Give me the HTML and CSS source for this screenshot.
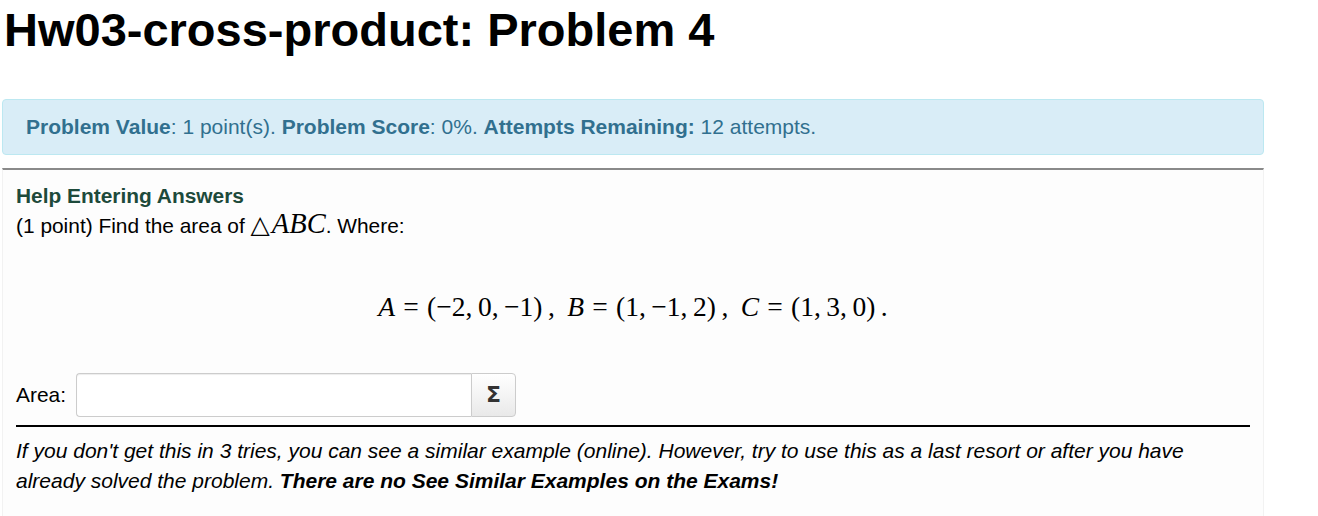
FILE: index.html
```html
<!DOCTYPE html>
<html>
<head>
<meta charset="utf-8">
<link rel="stylesheet" href="styles.css">
</head>
<body>
<div class="page">
  <h1 class="title">Hw03-cross-product: Problem 4</h1>
  <div class="alert"><b>Problem Value</b>: 1 point(s). <b>Problem Score</b>: 0%. <b>Attempts Remaining:</b> 12 attempts.</div>
  <div class="problem">
    <div class="help">Help Entering Answers</div>
    <div class="text">(1 point) Find the area of <span class="m"><span class="tri">△</span><i>ABC</i></span>. Where:</div>
    <div class="display">
      <span class="m big"><i>A</i><span class="rel">=</span>(−2<span class="cm">,</span>0<span class="cm">,</span>−1)<span class="sp1"></span>,<span class="sp2"></span><i>B</i><span class="rel">=</span>(1<span class="cm">,</span>−1<span class="cm">,</span>2)<span class="sp1"></span>,<span class="sp2"></span><i>C</i><span class="rel">=</span>(1<span class="cm">,</span>3<span class="cm">,</span>0)<span class="sp1"></span>.</span>
    </div>
    <div class="answer">
      <label class="lbl">Area:</label>
      <div class="group">
        <input class="inp" type="text">
        <span class="btn">Σ</span>
      </div>
    </div>
    <div class="note">
      <p class="note-text"><i>If you don't get this in 3 tries, you can see a similar example (online). However, try to use this as a last resort or after you have already solved the problem. <b>There are no See Similar Examples on the Exams!</b></i></p>
    </div>
  </div>
</div>
</body>
</html>
```
FILE: styles.css
```css
html, body {
  margin: 0;
  padding: 0;
  background: #fff;
}
body {
  font-family: "Liberation Sans", Arial, sans-serif;
  color: #000;
}
.page {
  width: 1262px;
  padding: 0 0 0 2px;
}
.title {
  font-size: 47px;
  font-weight: bold;
  line-height: 56px;
  margin: 0;
  padding: 2px 0 0 2px;
  color: #000;
}
.alert {
  margin-top: 41px;
  height: 56px;
  box-sizing: border-box;
  border: 1px solid #bce8f1;
  background: #d9edf7;
  border-radius: 4px;
  color: #31708f;
  font-size: 21px;
  line-height: 54px;
  padding: 0 0 0 23px;
  white-space: nowrap;
}
.alert b { font-weight: bold; }
.problem {
  margin-top: 13px;
  border-top: 2px solid #8a8a8a;
  background: #fdfdfd;
  border-right: 1px solid #f2f2f2;
  border-left: 1px solid #f2f2f2;
  padding: 11px 13px 20px 13px;
  font-size: 20.9px;
  line-height: 30px;
}
.help {
  font-weight: bold;
  color: #1d4a3b;
}
.m {
  font-family: "Liberation Serif", "DejaVu Serif", serif;
}
.text .m {
  font-size: 28.5px;
  line-height: 20px;
}
.tri {
  font-family: "DejaVu Sans", sans-serif;
  font-size: 25px;
  margin-right: 2px;
}
.display {
  text-align: center;
  margin-top: 51px;
  height: 30px;
}
.big {
  font-size: 27.5px;
}
.rel {
  padding: 0 0.3em;
}
.cm {
  margin-right: 0.2em;
}
.sp1 {
  display: inline-block;
  width: 0.2em;
}
.sp2 {
  display: inline-block;
  width: 0.45em;
}
.answer {
  display: flex;
  align-items: center;
  margin-top: 51px;
  gap: 10px;
}
.lbl {
  font-size: 20.9px;
}
.group {
  display: flex;
  width: 440px;
  height: 44px;
}
.inp {
  flex: 1;
  min-width: 0;
  box-sizing: border-box;
  height: 44px;
  border: 1px solid #ccc;
  border-right: none;
  border-radius: 4px 0 0 4px;
  box-shadow: inset 0 1px 1px rgba(0,0,0,0.075);
  padding: 0 8px;
  font-size: 20px;
  background: #fff;
}
.btn {
  width: 45px;
  box-sizing: border-box;
  border: 1px solid #ccc;
  border-radius: 0 4px 4px 0;
  background: linear-gradient(#fff, #e9e9e9);
  display: flex;
  align-items: center;
  justify-content: center;
  font-weight: bold;
  font-size: 22px;
  color: #333;
  font-family: "DejaVu Sans", sans-serif;
}
.note {
  margin-top: 8px;
  border-top: 2px solid #000;
  padding-top: 9px;
  width: 1234px;
}
.note-text {
  margin: 0;
  font-size: 21px;
  line-height: 30px;
  padding-right: 40px;
}
```
